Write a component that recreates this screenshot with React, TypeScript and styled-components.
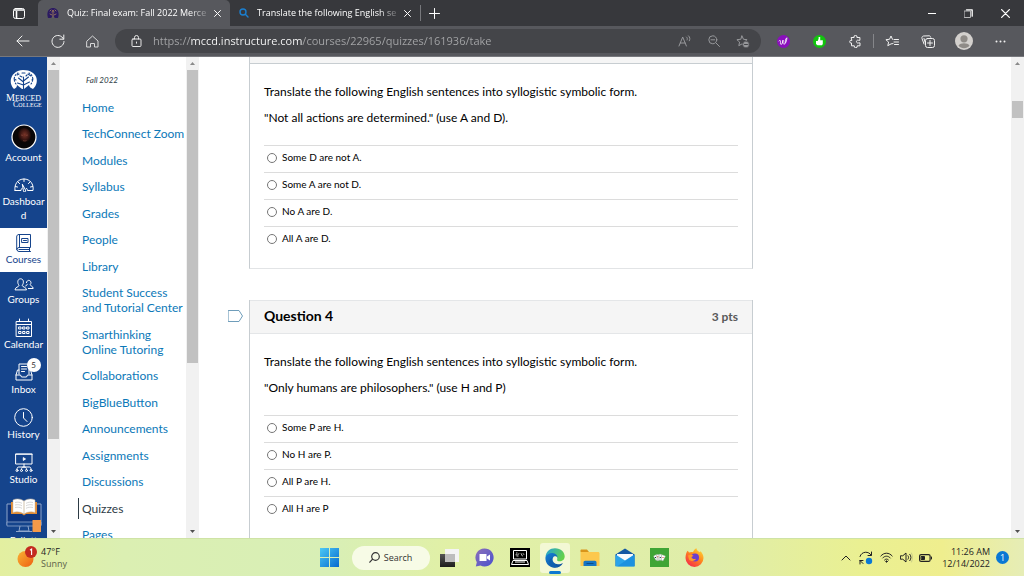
import React from "react";
import styled, { createGlobalStyle, css } from "styled-components";

const ui = `"Open Sans", "Noto Sans", sans-serif`;

const Global = createGlobalStyle`
  * { box-sizing: border-box; }
  body { margin: 0; background: #fff; font-family: Lato, "Liberation Sans", sans-serif; color: #000; overflow: hidden; }
  button { border: 0; padding: 0; background: none; font: inherit; color: inherit; }
  a { color: inherit; text-decoration: none; }
  ul { list-style: none; margin: 0; padding: 0; }
  svg { display: block; flex: none; }
`;

const Screen = styled.div`
  height: 100vh;
  display: flex;
  flex-direction: column;
`;

/* ---------- browser chrome ---------- */
const TabStrip = styled.header`
  height: 26px;
  flex: none;
  display: flex;
  background: #37383c;
  color: #fff;
  font: 9px/26px ${ui};
`;
const Cell = styled.button<{ $w: number }>`
  width: ${(p) => p.$w}px;
  height: 100%;
  flex: none;
  display: flex;
  align-items: center;
  justify-content: center;
`;
const Tab = styled.div<{ $active?: boolean }>`
  width: ${(p) => (p.$active ? 192 : 190)}px;
  display: flex;
  align-items: center;
  gap: 8px;
  padding: 0 9px;
  border-radius: 5px 5px 0 0;
  background: ${(p) => (p.$active ? "#57585d" : "transparent")};
`;
const TabTitle = styled.span`
  flex: 1;
  min-width: 0;
  white-space: nowrap;
  mask-image: linear-gradient(90deg, #000 88%, transparent 104%);
`;
const StripDivider = styled.span`
  width: 1px;
  height: 16px;
  margin-top: 5px;
  background: #77787c;
`;
const Spacer = styled.div`
  flex: 1;
`;
const Toolbar = styled.div`
  height: 31px;
  flex: none;
  display: flex;
  align-items: center;
  padding: 0 6px 0 5px;
  background: #57585d;
  border-bottom: 1px solid #77787d;
  color: #f2f2f2;
`;
const Address = styled.div`
  flex: 1;
  min-width: 0;
  height: 24px;
  margin: 0 4px 0 5px;
  padding-left: 6px;
  padding-right: 3px;
  border-radius: 12px;
  background: #444549;
  color: #97989b;
  display: flex;
  align-items: center;
`;
const UrlInput = styled.input`
  flex: 1;
  min-width: 0;
  height: 20px;
  margin-left: 2px;
  padding: 0;
  border: 0;
  outline: 0;
  font: 11px/20px ${ui};
  color: transparent;
  background: linear-gradient(90deg, #a6a7a9 37px, #fff 37px, #fff 149px, #a6a7a9 149px);
  background-clip: text;
`;
const ToolDivider = styled.span`
  width: 1px;
  height: 14px;
  background: #85868a;
`;

/* ---------- page ---------- */
const Page = styled.div`
  flex: 1;
  min-height: 0;
  display: flex;
  overflow: hidden;
`;
const GlobalNav = styled.nav`
  width: 47px;
  flex: none;
  overflow: hidden;
  background: #15448c;
  color: #fff;
`;
const LogoLink = styled.a`
  display: flex;
  height: 61px;
  justify-content: center;
  padding-top: 12px;
`;
const NavItem = styled.a<{ $current?: boolean }>`
  display: flex;
  flex-direction: column;
  align-items: center;
  padding: 5px 1px 6px;
  font-size: 10px;
  line-height: 14px;
  text-align: center;
  ${(p) =>
    p.$current &&
    css`
      background: #fff;
      color: #15448c;
    `}
`;
const NavIcon = styled.span<{ $h: number }>`
  position: relative;
  width: 28px;
  height: ${(p) => p.$h}px;
  display: flex;
  align-items: center;
  justify-content: center;
`;
const NavText = styled.span`
  width: 100%;
  overflow-wrap: anywhere;
`;
const Badge = styled.span`
  position: absolute;
  right: -3px;
  top: -4px;
  width: 14px;
  height: 14px;
  border-radius: 50%;
  background: #fff;
  color: #333;
  font-size: 8px;
  line-height: 14px;
`;
const ScrollTrack = styled.div`
  width: 13px;
  flex: none;
  display: flex;
  flex-direction: column;
  align-items: center;
  padding: 5px 0;
  background: #f1f1f1;
`;
const Thumb = styled.div<{ $top: number; $h: number }>`
  width: 11px;
  height: ${(p) => p.$h}px;
  margin-top: ${(p) => p.$top}px;
  background: #c1c1c1;
`;
const CourseNav = styled.nav`
  width: 126px;
  flex: none;
  overflow: hidden;
  padding: 17px 0 0 18px;
`;
const Term = styled.div`
  padding-left: 8px;
  margin-bottom: 11px;
  font: italic 8px/12px Lato, sans-serif;
  color: #2d3b45;
`;
const CourseItem = styled.li`
  padding-bottom: 5px;
  &:nth-child(even) {
    padding-bottom: 6px;
  }
`;
const CourseLink = styled.a<{ $current?: boolean }>`
  display: block;
  padding: 3px 0 3px 3px;
  border-left: 1px solid ${(p) => (p.$current ? "#2d3b45" : "transparent")};
  color: ${(p) => (p.$current ? "#2d3b45" : "#0b78b8")};
  font-size: 12px;
  line-height: 15px;
`;
const Main = styled.main`
  flex: 1;
  min-width: 0;
  padding: 0 15px 0 29px;
  overflow: hidden;
`;
const QuestionRow = styled.section`
  display: flex;
  margin-bottom: 31px;
`;
const FlagButton = styled.button`
  width: 21px;
  flex: none;
  height: 31px;
  display: flex;
  align-items: center;
`;
const Card = styled.article`
  flex: 1;
  min-width: 0;
  max-width: 504px;
  border: 1px solid #c7cdd1;
  border-top: 0;
  border-bottom-color: #e2e4e6;
`;
const CardHead = styled.header<{ $cut?: boolean }>`
  height: ${(p) => (p.$cut ? 7 : 34)}px;
  display: flex;
  align-items: center;
  justify-content: space-between;
  padding: 0 14px 2px;
  background: #f5f5f5;
  border-top: ${(p) => (p.$cut ? "0" : "1px solid #e4e6e8")};
  border-bottom: 1px solid ${(p) => (p.$cut ? "#c7cdd1" : "#e4e6e8")};
`;
const QuestionName = styled.h2`
  margin: 0;
  font-size: 14px;
  line-height: 18px;
`;
const Points = styled.span`
  font-size: 12px;
  font-weight: 700;
  color: #595959;
`;
const CardBody = styled.div`
  padding: 19px 14px 15px;
`;
const Prompt = styled.p`
  margin: 0 0 8px;
  font-size: 12px;
  line-height: 18px;
`;
const Answers = styled.div`
  margin-top: 18px;
`;
const Answer = styled.label`
  height: 27px;
  display: flex;
  align-items: center;
  gap: 5px;
  padding: 0 0 5px 3px;
  border-top: 1px solid #dcdcdc;
  font-size: 10px;
  line-height: 14px;
`;
const Radio = styled.input`
  appearance: none;
  width: 10px;
  height: 10px;
  margin: 3px 0 0;
  border: 1px solid #767676;
  border-radius: 50%;
  background: #fff;
`;

/* ---------- taskbar ---------- */
const Taskbar = styled.footer`
  height: 38px;
  flex: none;
  display: grid;
  grid-template-columns: 1fr auto 1fr;
  align-items: center;
  border-top: 1px solid #cfe3a6;
  background: linear-gradient(90deg, #e3efa0 0%, #dbefb2 12%, #d8efb6 32%, #e1f0a6 44%, #dfedaa 70%, #eaf092 84%, #efee8e 92%, #e6edb6 100%);
  font-family: ${ui};
  color: #222;
`;
const Weather = styled.button`
  display: flex;
  justify-self: start;
  align-items: center;
  gap: 3px;
  padding-left: 16px;
  font-size: 9px;
  line-height: 12px;
  text-align: left;
`;
const Conditions = styled.span`
  color: #5c6148;
`;
const Cluster = styled.div`
  display: flex;
  align-items: center;
  gap: 5px;
`;
const TaskButton = styled.button<{ $active?: boolean }>`
  width: 30px;
  height: 30px;
  display: flex;
  align-items: center;
  justify-content: center;
  border-radius: 3px;
  position: relative;
  ${(p) =>
    p.$active &&
    css`
      background: #f3f8d4;
      &::after {
        content: "";
        position: absolute;
        bottom: -1px;
        width: 12px;
        height: 3px;
        border-radius: 2px;
        background: #0d78cf;
      }
    `}
`;
const SearchPill = styled.button`
  width: 78px;
  height: 24px;
  margin-left: 2px;
  border-radius: 12px;
  background: #f7fbe6;
  display: flex;
  align-items: center;
  justify-content: center;
  gap: 4px;
  font-size: 9px;
  color: #333;
`;
const Tray = styled.div`
  justify-self: end;
  display: flex;
  align-items: center;
  padding-right: 15px;
`;
const Clock = styled.time`
  width: 55px;
  margin-right: 6px;
  font-size: 9px;
  line-height: 12px;
  text-align: right;
  white-space: nowrap;
`;
const Count = styled.span`
  width: 13px;
  height: 13px;
  border-radius: 50%;
  background: #0a78d4;
  color: #fff;
  font-size: 9px;
  line-height: 13px;
  text-align: center;
`;

/* ---------- drawings ---------- */
type IconProps = { w?: number; h?: number; box?: string; sw?: number; children: React.ReactNode };
const Icon = ({ w = 16, h = w, box = `0 0 ${w} ${h}`, sw = 1, children }: IconProps) => (
  <svg width={w} height={h} viewBox={box} fill="none" stroke="currentColor" strokeWidth={sw} strokeLinecap="round" strokeLinejoin="round" aria-hidden="true">
    {children}
  </svg>
);
const Close = ({ size = 7 }: { size?: number }) => (
  <Icon w={size} box="0 0 7 7"><path d="M.5.5l6 6M6.5.5l-6 6" /></Icon>
);
const Star = "M6 1l1.500 3.300 3.600.4-2.700 2.400.8 3.600L6 8.900l-3.200 1.800.8-3.600L.9 4.700l3.600-.4z";

const ScrollBar = ({ top, h }: { top: number; h: number }) => (
  <ScrollTrack aria-hidden="true">
    <Icon w={5} h={3}><path d="M0 3L2.500 0 5 3z" fill="#8a8a8a" stroke="none" /></Icon>
    <Thumb $top={top} $h={h} />
    <Spacer />
    <Icon w={5} h={3}><path d="M0 0h5L2.500 3z" fill="#505050" stroke="none" /></Icon>
  </ScrollTrack>
);

const MercedLogo = () => (
  <svg width="40" height="44" viewBox="0 0 40 44" role="img" aria-label="Merced College">
    <path d="M10 20C4 14 6 2 19 1c15 0 17 13 10 19-2-1-4-2-4-4l-5 4h-2l-5-4c0 2-1 3-3 4z" fill="#fff" />
    <g fill="none" stroke="#15448c" strokeWidth="1.100" strokeLinecap="round">
      <path d="M19.500 20V8M19.500 13l-5-4M19.500 12l5-4M19.500 16l-6-2M19.500 16l6-3M13 6l2-1M18 4h3M24 5l3 2M12 11l-2-1M28 11l1-1M16 7l2 1M22 7l1-1" />
      <path d="M12 15c-3-4-2-9 2-11M27 15c3-4 2-9-2-11" strokeDasharray="1 2" />
    </g>
    <g fill="#fff" fontFamily="Liberation Serif, serif">
      <text x="2" y="32" fontSize="8"><tspan fontSize="10">M</tspan>ERCED</text>
      <text x="9" y="38" fontSize="6"><tspan fontSize="8">C</tspan>OLLEGE</text>
    </g>
  </svg>
);

const AccountPhoto = () => (
  <svg width="26" height="26" viewBox="0 0 26 26" aria-hidden="true">
    <defs>
      <radialGradient id="face" cx=".55" cy=".42" r=".5">
        <stop offset="0" stopColor="#7a3529" />
        <stop offset=".6" stopColor="#3d1713" />
        <stop offset="1" stopColor="#0a0505" />
      </radialGradient>
    </defs>
    <circle cx="13" cy="13" r="12" fill="#090607" stroke="#fff" strokeWidth="1.200" />
    <ellipse cx="13" cy="12" rx="7" ry="8" fill="url(#face)" />
    <path d="M10 11l2 .4M15 11.400l2-.4M12 16.500c1 .6 2.500.6 3.500 0" stroke="#8c4a3c" strokeWidth=".6" fill="none" />
  </svg>
);

const Dashboard = () => (
  <Icon w={20} h={14}>
    <path d="M1 12.500C0 6 4 1 10 1s10 5 9 11.500h-5.500c0-1-.4-1.600-1-2.200M1 12.500h6c0-1 .4-1.700 1-2.200M8.500 6.500l3 5.500a1.200 1.200 0 1 1-2.200.6zM10 1v2.500M4 4l1.600 1.600M16 4l-1.600 1.600M1.500 8.500l2 .5M18.500 8.500l-2 .5" />
  </Icon>
);
const Courses = () => (
  <Icon w={15} h={18}>
    <path d="M3 .5h11.500v13H3a2 2 0 0 0 0 4h11.500M3 .5C1.300.5.7 1.400.7 3v12.500M3.500.5v13M13.500 14v3M6 4.500h6v4H6zM7.500 6.500h3M3 15.500h10" />
  </Icon>
);
const Groups = () => (
  <Icon w={20} h={13}>
    <path d="M1 11.500c0-2.500 4-2.300 4-4.200C4 6 3.800 5 3.800 3.800 3.800 2 5 .8 6.600.8s2.800 1.200 2.800 3c0 1.200-.2 2.200-1.200 3.500 0 1.900 4.300 1.700 4.300 4.200zM12.400 4.600a2.300 2.300 0 1 1 3.800 1.800c0 1.800 3 1.600 3 4.100h-4.800M13.200 6.300c0 .8-.6 1.300-1.500 1.600" />
  </Icon>
);
const Calendar = () => (
  <Icon w={18} h={19}>
    <path d="M1.500 3.500h15v15h-15zM1.500 6.500h15M4.500 1v2.500M13.500 1v2.500" />
    <path d="M4 9h2v2H4zM8 9h2v2H8zM12 9h2v2h-2zM4 13.500h2v2H4zM8 13.500h2v2H8zM12 13.500h2v2h-2z" />
  </Icon>
);
const Inbox = () => (
  <Icon w={18} h={18}>
    <path d="M4 11V1h10v10M6.500 3.500h5M6.500 6h5M6.500 8.500h3M4 7H2.500L1 12v5h16v-5l-1.500-5H14M1 12h4.500l1 2h5l1-2H17" />
  </Icon>
);
const History = () => (
  <Icon w={19} h={19}>
    <circle cx="9.500" cy="9.500" r="8.800" /><path d="M9.500 4.500v5.500l3.500 3.500" />
  </Icon>
);
const Studio = () => (
  <Icon w={18} h={19}>
    <path d="M1 1h16v10H1zM.8 1.200h16.400M9 11v3M2 16.500c0-2 .6-2.500 2-2.500h10c1.400 0 2 .5 2 2.500M6.500 16.500c0-1.800.5-2.500 2.500-2.500s2.500.7 2.500 2.500" />
    <path d="M8.300 5v2.400L10.200 6.200z" fill="currentColor" />
    <circle cx="2" cy="17.500" r="1" /><circle cx="6.500" cy="17.500" r="1" /><circle cx="11.500" cy="17.500" r="1" /><circle cx="16" cy="17.500" r="1" />
  </Icon>
);
const BookStore = () => (
  <svg width="36" height="35" viewBox="0 0 36 35" aria-hidden="true">
    <path d="M5 6H1v21h34V6h-4" fill="#0d357f" stroke="#8fa6cb" />
    <path d="M1 24h34v4H1z" fill="#15448c" stroke="#8fa6cb" strokeWidth=".8" />
    <path d="M14 28l-1 5h10l-1-5M10 33.500h16" fill="none" stroke="#8fa6cb" />
    <path d="M5 4h26v12H20l-2 1.500L16 16H5z" fill="#e08b35" />
    <path d="M7 2c4-2 8-1 11 1v13c-3-2-7-3-11-1.500zM29 2c-4-2-8-1-11 1v13c3-2 7-3 11-1.500z" fill="#fff" stroke="#cbb9a0" strokeWidth=".5" />
    <path d="M9 4.500c3-.6 5-.3 7 .8M9 7c3-.6 5-.3 7 .8M9 9.500c3-.6 5-.3 7 .8M27 4.500c-3-.6-5-.3-7 .8M27 7c-3-.6-5-.3-7 .8M27 9.500c-3-.6-5-.3-7 .8" stroke="#bbb" strokeWidth=".6" fill="none" />
    <path d="M26.500 22H35v12h-8.500z" fill="#f49a49" />
  </svg>
);

const courseLinks = [
  "Home", "TechConnect Zoom", "Modules", "Syllabus", "Grades", "People", "Library",
  "Student Success\nand Tutorial Center", "Smarthinking\nOnline Tutoring", "Collaborations",
  "BigBlueButton", "Announcements", "Assignments", "Discussions", "Quizzes", "Pages",
];

type QuestionProps = { id: string; title?: string; prompt: string; answers: string[] };
const Question = ({ id, title, prompt, answers }: QuestionProps) => (
  <QuestionRow>
    <FlagButton aria-label="Flag question">
      {title && (
        <Icon w={15} h={12}><path d="M.5.5h10.500l3.500 5.500-3.500 5.500H.5z" stroke="#6f9dba" /></Icon>
      )}
    </FlagButton>
    <Card>
      <CardHead $cut={!title}>
        {title && <QuestionName>{title}</QuestionName>}
        {title && <Points>3 pts</Points>}
      </CardHead>
      <CardBody>
        <Prompt>Translate the following English sentences into syllogistic symbolic form.</Prompt>
        <Prompt>{prompt}</Prompt>
        <Answers role="radiogroup" aria-label={prompt}>
          {answers.map((a) => (
            <Answer key={a}>
              <Radio type="radio" name={id} />
              {a}
            </Answer>
          ))}
        </Answers>
      </CardBody>
    </Card>
  </QuestionRow>
);

export default function App() {
  return (
    <Screen>
      <Global />
      <TabStrip>
        <Cell $w={38} aria-label="Tab actions">
          <Icon w={12} h={11}>
            <rect x=".5" y=".5" width="11" height="10" rx="2" />
            <path d="M1 2h10M3.500 3v7" strokeWidth="1.600" strokeLinecap="butt" />
          </Icon>
        </Cell>
        <Tab $active>
          <Icon w={12} h={11}>
            <g stroke="none">
              <path d="M1 10C-1 4 2 0 6 0s7 4 5 10H8L6 8l-2 2z" fill="#2b1a62" />
              <path d="M3 3l1-1M8 2l1 1M5 4l1-2 1 2M3 6l2 1M9 6L7 7M6 9V4" stroke="#a8875c" strokeWidth=".8" />
            </g>
          </Icon>
          <TabTitle>Quiz: Final exam: Fall 2022 Merce</TabTitle>
          <button aria-label="Close tab"><Close /></button>
        </Tab>
        <Tab>
          <Icon w={10} h={10} sw={1.4}>
            <g stroke="#1b7fd0"><circle cx="4" cy="4" r="3" /><path d="M6.300 6.300L9 9" /></g>
          </Icon>
          <TabTitle>Translate the following English se</TabTitle>
          <button aria-label="Close tab"><Close /></button>
        </Tab>
        <StripDivider />
        <Cell $w={27} aria-label="New tab"><Icon w={11}><path d="M5.500.5v10M.5 5.500h10" /></Icon></Cell>
        <Spacer />
        <Cell $w={36} aria-label="Minimize"><Icon w={8}><path d="M0 4.500h8" /></Icon></Cell>
        <Cell $w={37} aria-label="Restore">
          <Icon w={9} h={9}><path d="M.5 2h6v6.500h-6z" stroke="#b9b9bb" /><path d="M2.500.8h5.700v6.400" strokeWidth="1.300" /></Icon>
        </Cell>
        <Cell $w={37} aria-label="Close window"><Close size={9} /></Cell>
      </TabStrip>

      <Toolbar>
        <Cell $w={35} aria-label="Back"><Icon w={14} h={12}><path d="M13 6H1M6 1L1 6l5 5" /></Icon></Cell>
        <Cell $w={35} aria-label="Refresh"><Icon w={14} h={14}><path d="M12.500 5A6 6 0 1 0 13 7.500M12.800 1v4.200H8.800" /></Icon></Cell>
        <Cell $w={35} aria-label="Home"><Icon w={13} h={13}><path d="M1 6l5.500-5L12 6v6H8.500V8.500h-4V12H1z" stroke="#d8d8d9" /></Icon></Cell>
        <Address>
          <Cell $w={30} aria-label="Site information">
            <Icon w={11} h={12}><rect x="1" y="4" width="9" height="7.500" rx="1" stroke="#e8e8e8" /><path d="M3.500 4V2.500a2 2 0 0 1 4 0V4M5.500 7v1.200" stroke="#e8e8e8" /></Icon>
          </Cell>
          <UrlInput aria-label="Address" defaultValue="https://mccd.instructure.com/courses/22965/quizzes/161936/take" />
          <Cell $w={29} aria-label="Read aloud">
            <Icon w={13} h={12}><path d="M1 11L4.700 2 8.400 11M2.300 8h4.800M8.500 2c1 .8 1 2 .6 3M10.500.8c1.800 1.500 1.600 3.600.8 5" /></Icon>
          </Cell>
          <Cell $w={29} aria-label="Zoom out">
            <Icon w={12}><circle cx="4.800" cy="4.800" r="4" /><path d="M7.800 7.800L11.500 11.500M3 4.800h3.600" /></Icon>
          </Cell>
          <Cell $w={30} aria-label="Add to favorites">
            <Icon w={14} h={13}><path d={Star} /><circle cx="10" cy="9.500" r="3.300" fill="#97989b" stroke="#444549" strokeWidth=".6" /><path d="M8.500 9.500h3" stroke="#444549" /></Icon>
          </Cell>
        </Address>
        <Cell $w={36} aria-label="W extension">
          <Icon w={13}><circle cx="6.500" cy="6.500" r="6.500" fill="#8a0fbd" stroke="none" /><path d="M2 6c1-1 1.500-.8 1.500.5S3 9.500 4.300 9.300 6 5 6 5s-.6 4 .8 4.200C8.500 9.200 10 5 9.800 2.800 8.500 4 8 6.500 8.200 8" stroke="#fff" strokeWidth=".9" /></Icon>
        </Cell>
        <Cell $w={36} aria-label="Thumbs up extension">
          <Icon w={13}><g stroke="none"><circle cx="6.500" cy="6.500" r="6.500" fill="#12c40e" /><path d="M3 6h1.700L5.600 3.800V2h1.600v3.300h2.600V9l-.8 1.300H4.500L3 9z" fill="#fff" /></g></Icon>
        </Cell>
        <Cell $w={36} aria-label="Extensions">
          <Icon w={13}><path d="M2.500 2.500h2.600a1.500 1.500 0 1 1 2.800 0h3v2.800H9.700a1.500 1.500 0 1 0 0 2.600H11v2.900H8.200a1.500 1.500 0 1 1-2.900 0H2.500V8a1.400 1.400 0 1 1 0-2.700z" /></Icon>
        </Cell>
        <ToolDivider />
        <Cell $w={36} aria-label="Favorites">
          <Icon w={14} h={12}><path d="M8 8.600L6 8.900l-3.200 1.800.8-3.600L.9 4.700l3.600-.4L6 1l1.500 3.300M9 4.500h4.500M9 7h4.500M9.500 9.500h4" /></Icon>
        </Cell>
        <Cell $w={36} aria-label="Collections">
          <Icon w={14} h={13}><path d="M3 9L1 3.500C.7 2 1.500 1.200 2.500 1L8 .8c1 0 1.500.5 1.700 1.400M4.500 8.500L3 3.500" /><rect x="4.500" y="3.500" width="9" height="9" rx="2" /><path d="M9 5.500v5M6.500 8h5" /></Icon>
        </Cell>
        <Cell $w={36} aria-label="Profile">
          <Icon w={18}><g stroke="none"><circle cx="9" cy="9" r="9" fill="#d3d0cd" /><circle cx="9" cy="6.800" r="3.600" fill="#8f8b87" /><path d="M3.500 13.500c2-3 9-3 11 0-2.500 3.500-8.500 3.500-11 0z" fill="#8f8b87" /></g></Icon>
        </Cell>
        <Cell $w={36} aria-label="Settings and more">
          <Icon w={11} h={3}><g fill="#f2f2f2" stroke="none"><circle cx="1.500" cy="1.500" r="1" /><circle cx="5.500" cy="1.500" r="1" /><circle cx="9.500" cy="1.500" r="1" /></g></Icon>
        </Cell>
      </Toolbar>

      <Page>
        <GlobalNav aria-label="Global navigation">
          <LogoLink href="#home"><MercedLogo /></LogoLink>
          <NavItem href="#account"><NavIcon $h={27}><AccountPhoto /></NavIcon><NavText>Account</NavText></NavItem>
          <NavItem href="#dashboard"><NavIcon $h={19}><Dashboard /></NavIcon><NavText>Dashboard</NavText></NavItem>
          <NavItem href="#courses" $current><NavIcon $h={19}><Courses /></NavIcon><NavText>Courses</NavText></NavItem>
          <NavItem href="#groups"><NavIcon $h={15}><Groups /></NavIcon><NavText>Groups</NavText></NavItem>
          <NavItem href="#calendar"><NavIcon $h={20}><Calendar /></NavIcon><NavText>Calendar</NavText></NavItem>
          <NavItem href="#inbox"><NavIcon $h={20}><Inbox /><Badge>5</Badge></NavIcon><NavText>Inbox</NavText></NavItem>
          <NavItem href="#history"><NavIcon $h={20}><History /></NavIcon><NavText>History</NavText></NavItem>
          <NavItem href="#studio"><NavIcon $h={20}><Studio /></NavIcon><NavText>Studio</NavText></NavItem>
          <NavItem href="#follett"><NavIcon $h={36}><BookStore /></NavIcon><NavText>Follett</NavText></NavItem>
        </GlobalNav>
        <ScrollBar top={5} h={369} />
        <CourseNav aria-label="Course navigation">
          <Term>Fall 2022</Term>
          <ul>
            {courseLinks.map((name) => (
              <CourseItem key={name}>
                <CourseLink href="#course" $current={name === "Quizzes"}>
                  {name.split("\n").map((part, i) => (
                    <React.Fragment key={part}>{i > 0 && <br />}{part}</React.Fragment>
                  ))}
                </CourseLink>
              </CourseItem>
            ))}
          </ul>
        </CourseNav>
        <ScrollBar top={5} h={293} />
        <Main>
          <Question
            id="q3"
            prompt={'"Not all actions are determined." (use A and D).'}
            answers={["Some D are not A.", "Some A are not D.", "No A are D.", "All A are D."]}
          />
          <Question
            id="q4"
            title="Question 4"
            prompt={'"Only humans are philosophers." (use H and P)'}
            answers={["Some P are H.", "No H are P.", "All P are H.", "All H are P"]}
          />
        </Main>
        <ScrollBar top={36} h={17} />
      </Page>

      <Taskbar>
        <Weather>
          <svg width="22" height="24" viewBox="0 0 22 24" aria-hidden="true">
            <defs>
              <linearGradient id="sun" x1="0" y1="0" x2="1" y2="1"><stop offset="0" stopColor="#f9b233" /><stop offset="1" stopColor="#ee5f12" /></linearGradient>
            </defs>
            <circle cx="9.500" cy="13" r="8" fill="url(#sun)" />
            <circle cx="15" cy="6" r="6" fill="#c42b1f" />
            <path d="M14 4.200L15.600 3v6" fill="none" stroke="#fff" strokeWidth="1.100" />
          </svg>
          <span>47°F<br /><Conditions>Sunny</Conditions></span>
        </Weather>
        <Cluster>
          <TaskButton aria-label="Start">
            <svg width="19" height="19" viewBox="0 0 19 19">
              <defs><linearGradient id="win" x1="0" y1="0" x2="1" y2="1"><stop offset="0" stopColor="#4cc9f5" /><stop offset="1" stopColor="#0669cf" /></linearGradient></defs>
              <path d="M0 0h9v9H0zM10 0h9v9h-9zM0 10h9v9H0zM10 10h9v9h-9z" fill="url(#win)" />
            </svg>
          </TaskButton>
          <SearchPill>
            <Icon w={11} sw={1.2}><circle cx="6.500" cy="4.500" r="3.800" /><path d="M3.600 7.200L.8 10.200" /></Icon>
            Search
          </SearchPill>
          <TaskButton aria-label="Task view">
            <svg width="19" height="18" viewBox="0 0 19 18">
              <defs><linearGradient id="tv" x1="0" y1="0" x2="0" y2="1"><stop offset="0" stopColor="#555" /><stop offset="1" stopColor="#1c1c1c" /></linearGradient></defs>
              <path d="M0 5h15v13H0z" fill="url(#tv)" />
              <path d="M5 0h14v13H5z" fill="#f4f4f4" />
              <path d="M5 5h10v8H5z" fill="#bdbdbd" />
            </svg>
          </TaskButton>
          <TaskButton aria-label="Chat">
            <svg width="19" height="19" viewBox="0 0 19 19">
              <defs><linearGradient id="chat" x1="0" y1="0" x2="1" y2="1"><stop offset="0" stopColor="#8c6fb8" /><stop offset="1" stopColor="#4a52cf" /></linearGradient></defs>
              <path d="M9.500.5a9 9 0 1 1-4 17L.8 18.500l1-4.300A9 9 0 0 1 9.500.5z" fill="url(#chat)" />
              <path d="M4.500 6h7v7h-7zM12 8.500L15 6.500v6L12 10.500z" fill="#fff" />
            </svg>
          </TaskButton>
          <TaskButton aria-label="Laptop app">
            <svg width="20" height="19" viewBox="0 0 20 19">
              <path d="M0 0h20v19H0z" fill="#000" />
              <path d="M3.500 2.500h13v8.500h-13zM3 12.500h14l1.500 4h-17zM5 14h10" fill="none" stroke="#fff" />
              <path d="M5.500 6.800h2M8 6.800l1-1.500M11 5.300l1.500 3M13 5.300l1 1.500M6 5h1.500M6.500 8h2" stroke="#ddd" strokeWidth=".9" />
            </svg>
          </TaskButton>
          <TaskButton $active aria-label="Edge">
            <svg width="20" height="20" viewBox="0 0 20 20">
              <defs>
                <linearGradient id="e1" x1="0" y1="0" x2="1" y2=".4"><stop offset="0" stopColor="#1f9fe0" /><stop offset="1" stopColor="#63d14c" /></linearGradient>
                <linearGradient id="e2" x1="0" y1="0" x2="1" y2="1"><stop offset="0" stopColor="#1580d8" /><stop offset="1" stopColor="#0d4a94" /></linearGradient>
              </defs>
              <path d="M.5 9C1 3.500 5 .3 10 .3c6 0 9.700 4 9.700 8.200 0 3.200-2.500 4.800-5 4.800-2 0-3-.8-2.600-1.600.6-1.200.3-4.300-3.300-4.700C5 6.600 2 7.500.5 9z" fill="url(#e1)" />
              <path d="M.4 9.500C1.500 6.500 4.500 4.800 7.500 5c3 .2 5 2.200 5 4.500-1-1.500-3.500-1.700-4.500.3-1.500 3 1.500 6.500 5 6.500 2 0 3.500-.5 5-1.300-1.500 3-4.600 4.800-8 4.800-5.500 0-9.800-4.300-9.600-10.300z" fill="url(#e2)" />
              <path d="M7.300 9.500c-1.800 3.500.6 8.500 6.200 8.800-2 1.200-4.500 1.400-6.500.7-3.500-2.500-3.500-8 .3-9.500z" fill="#0f5fae" />
            </svg>
          </TaskButton>
          <TaskButton aria-label="File Explorer">
            <svg width="20" height="18" viewBox="0 0 20 18">
              <path d="M.5 1.500C.5.700 1 .5 1.500.5H7l2 2.500H.5z" fill="#d9951a" />
              <path d="M.5 3H18c1 0 1.500.6 1.500 1.500V17H.5z" fill="#fcc84d" />
              <path d="M3.500 17v-3.500c0-1 .6-1.700 1.600-1.700h9.800c1 0 1.600.7 1.600 1.700V17z" fill="#1575c4" />
              <path d="M6.500 14.500h7" stroke="#0b4c8c" />
            </svg>
          </TaskButton>
          <TaskButton aria-label="Mail">
            <svg width="20" height="19" viewBox="0 0 20 19">
              <path d="M.5 6.500L10 .5l9.500 6V18H.5z" fill="#1257a3" />
              <path d="M2 6h16v8H2z" fill="#f7fafc" />
              <path d="M.5 6.500L10 12.500l9.500-6V18.500H.5z" fill="#2aa3ea" />
              <path d="M19.500 6.500V18.500H2z" fill="#1686d8" opacity=".6" />
            </svg>
          </TaskButton>
          <TaskButton aria-label="Solitaire">
            <svg width="19" height="19" viewBox="0 0 19 19">
              <path d="M0 0h19v19H0z" fill="#3fa535" />
              <path d="M3.500 8l3-1.500 1.500 5-2 1zM6.500 6.500H9v6l-2 .3zM9 6.300h2.500l-.3 6H9zM11.500 6.500l4 1.500-2.500 5-2-1z" fill="#fff" stroke="#8aa78a" strokeWidth=".4" />
              <path d="M7.300 8.300h1v1h-1zM12.500 9h1v1h-1z" fill="#d33" /><path d="M5 9h1v1H5zM9.800 9h1v1h-1z" fill="#225" />
            </svg>
          </TaskButton>
          <TaskButton aria-label="Firefox">
            <svg width="19" height="19" viewBox="0 0 19 19">
              <defs><linearGradient id="ff" x1=".9" y1="0" x2=".2" y2="1"><stop offset="0" stopColor="#ffdf3a" /><stop offset=".45" stopColor="#ff8a1e" /><stop offset="1" stopColor="#f5264d" /></linearGradient></defs>
              <path d="M1 6c.5-1.500 1-2.500 1.800-3.200L4 4.500c1.500-.8 3-.7 4-.3C8.500 2.500 10 .8 11.500.3c0 2 1.500 2.600 3 4l.8-1c2 1.500 3.200 4 3.200 6.700a9 9 0 0 1-18 0c0-1.500.2-2.800.5-4z" fill="url(#ff)" />
              <circle cx="10" cy="9.500" r="4" fill="#6b3fd0" />
              <path d="M3 7.500c2-1.200 4-.8 5.500.2l-2 1.300c.5 2 2.500 2.500 4.500 1.800-1 2.500-5 3-7 .7z" fill="#ff9a2b" />
            </svg>
          </TaskButton>
        </Cluster>
        <Tray>
          <Cell $w={20} aria-label="Show hidden icons"><Icon w={10} h={6}><path d="M1 5l4-4 4 4" /></Icon></Cell>
          <Cell $w={20} aria-label="Sync">
            <Icon w={14} h={14}><path d="M1 5.500C2.500 0 10 0 12 4M12.500 1v3.500H9M1 9.500v3.500M1 9.500h3M1.500 10L4 12.500" /><circle cx="10" cy="10" r="3.200" fill="#0a78d4" stroke="none" /></Icon>
          </Cell>
          <Cell $w={21} aria-label="Network">
            <Icon w={13} h={11}><path d="M.8 4C4 .2 9 .2 12.200 4M2.700 6c2-2.500 5.600-2.500 7.600 0M4.500 8c1-1.300 3-1.300 4 0" /><circle cx="6.500" cy="9.500" r=".7" fill="currentColor" /></Icon>
          </Cell>
          <Cell $w={18} aria-label="Volume">
            <Icon w={13} h={11}><path d="M.8 3.800h2L6 1v9L2.800 7.200h-2zM8 3.800c.8 1 .8 2.400 0 3.400M9.800 2.300c1.600 2 1.600 4.400 0 6.400" /><path d="M11.500 1c1.300 2.500 1.300 6 0 9" stroke="#c9cc88" /></Icon>
          </Cell>
          <Cell $w={20} aria-label="Battery">
            <Icon w={13} h={8}><rect x=".6" y=".6" width="10.500" height="6.800" rx="1.500" strokeWidth="1.200" /><path d="M2.500 2.500h3v3h-3z" fill="currentColor" /><path d="M12.500 3v2" /></Icon>
          </Cell>
          <Clock>11:26 AM<br />12/14/2022</Clock>
          <Count>1</Count>
        </Tray>
      </Taskbar>
    </Screen>
  );
}
